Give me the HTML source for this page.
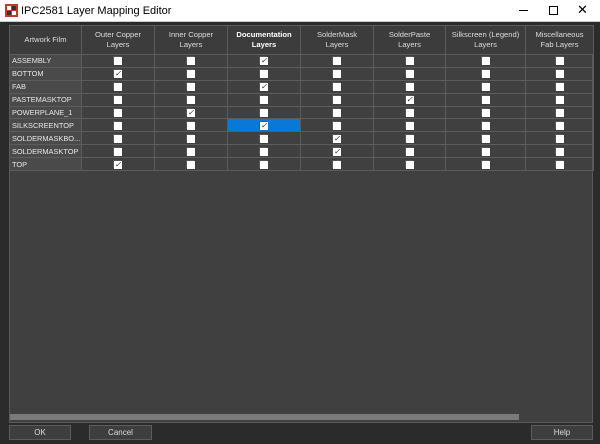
<!DOCTYPE html>
<html><head><style>
*{margin:0;padding:0;box-sizing:border-box}
body{width:600px;height:444px;background:#2b2b2b;font-family:"Liberation Sans",sans-serif;position:relative;overflow:hidden}
.title{position:absolute;left:0;top:0;width:600px;height:22px;background:#fff;border-bottom:1px solid #ccc}
.title span{position:absolute;left:21px;top:5px;font-size:11px;color:#000}
.panel{position:absolute;left:9px;top:25px;width:584px;height:398px;background:#404040;border:1px solid #5a5a5a}
table{position:absolute;left:9px;top:25px;border-collapse:collapse;font-size:7.6px;color:#ddd;table-layout:fixed;width:584px}
td,th{border:1px solid #5c5c5c;padding:0}
th{height:29px;font-weight:normal;text-align:center;line-height:10px;background:#3c3c3c}
th.b{font-weight:bold;color:#fff}
td{height:12.9px;text-align:center}
td.n{text-align:left;padding-left:2px;background:#4a4a4a;color:#e8e8e8;font-size:7.4px;white-space:nowrap;overflow:hidden}
.c{display:inline-block;width:8px;height:8px;background:#fff;vertical-align:middle;position:relative;font-size:8px;line-height:8px;color:#333;box-shadow:-1px -1px 0 #555}
.sel{background:#0a78d7}
.scroll{position:absolute;left:10px;top:414px;width:509px;height:6px;background:#7a7a7a}
.btn{position:absolute;top:425px;height:15px;background:#3e3e3e;border:1px solid #5c5c5c;color:#ddd;font-size:8px;text-align:center;line-height:13px}
</style></head><body>
<div class="title">
<svg style="position:absolute;left:5px;top:4px" width="13" height="13"><rect width="13" height="13" fill="#c0392b"/><rect x="2" y="2" width="4" height="4" fill="#fff"/><rect x="7" y="7" width="4" height="4" fill="#fff"/><rect x="7" y="2" width="4" height="4" fill="#333"/><rect x="2" y="7" width="4" height="4" fill="#333"/></svg>
<span>IPC2581 Layer Mapping Editor</span>
<div style="position:absolute;left:519px;top:10px;width:9px;height:1px;background:#000"></div>
<div style="position:absolute;left:549px;top:6px;width:9px;height:9px;border:1px solid #000"></div>
<div style="position:absolute;left:577px;top:2px;font-size:13px;color:#000">✕</div>
</div>
<div class="panel"></div>
<table>
<colgroup><col style="width:72px"><col style="width:73px"><col style="width:73px"><col style="width:73px"><col style="width:73px"><col style="width:72px"><col style="width:80px"><col style="width:68px"></colgroup>
<tr><th>Artwork Film</th><th>Outer Copper<br>Layers</th><th>Inner Copper<br>Layers</th><th class="b">Documentation<br>Layers</th><th>SolderMask<br>Layers</th><th>SolderPaste<br>Layers</th><th>Silkscreen (Legend)<br>Layers</th><th>Miscellaneous<br>Fab Layers</th></tr>
<tr><td class="n">ASSEMBLY</td><td><i class="c"></i></td><td><i class="c"></i></td><td><i class="c">✓</i></td><td><i class="c"></i></td><td><i class="c"></i></td><td><i class="c"></i></td><td><i class="c"></i></td></tr>
<tr><td class="n">BOTTOM</td><td><i class="c">✓</i></td><td><i class="c"></i></td><td><i class="c"></i></td><td><i class="c"></i></td><td><i class="c"></i></td><td><i class="c"></i></td><td><i class="c"></i></td></tr>
<tr><td class="n">FAB</td><td><i class="c"></i></td><td><i class="c"></i></td><td><i class="c">✓</i></td><td><i class="c"></i></td><td><i class="c"></i></td><td><i class="c"></i></td><td><i class="c"></i></td></tr>
<tr><td class="n">PASTEMASKTOP</td><td><i class="c"></i></td><td><i class="c"></i></td><td><i class="c"></i></td><td><i class="c"></i></td><td><i class="c">✓</i></td><td><i class="c"></i></td><td><i class="c"></i></td></tr>
<tr><td class="n">POWERPLANE_1</td><td><i class="c"></i></td><td><i class="c">✓</i></td><td><i class="c"></i></td><td><i class="c"></i></td><td><i class="c"></i></td><td><i class="c"></i></td><td><i class="c"></i></td></tr>
<tr><td class="n">SILKSCREENTOP</td><td><i class="c"></i></td><td><i class="c"></i></td><td class="sel"><i class="c">✓</i></td><td><i class="c"></i></td><td><i class="c"></i></td><td><i class="c"></i></td><td><i class="c"></i></td></tr>
<tr><td class="n">SOLDERMASKBO...</td><td><i class="c"></i></td><td><i class="c"></i></td><td><i class="c"></i></td><td><i class="c">✓</i></td><td><i class="c"></i></td><td><i class="c"></i></td><td><i class="c"></i></td></tr>
<tr><td class="n">SOLDERMASKTOP</td><td><i class="c"></i></td><td><i class="c"></i></td><td><i class="c"></i></td><td><i class="c">✓</i></td><td><i class="c"></i></td><td><i class="c"></i></td><td><i class="c"></i></td></tr>
<tr><td class="n">TOP</td><td><i class="c">✓</i></td><td><i class="c"></i></td><td><i class="c"></i></td><td><i class="c"></i></td><td><i class="c"></i></td><td><i class="c"></i></td><td><i class="c"></i></td></tr>
</table>
<div class="scroll"></div>
<div class="btn" style="left:9px;width:62px">OK</div>
<div class="btn" style="left:89px;width:63px">Cancel</div>
<div class="btn" style="left:531px;width:62px">Help</div>
</body></html>
